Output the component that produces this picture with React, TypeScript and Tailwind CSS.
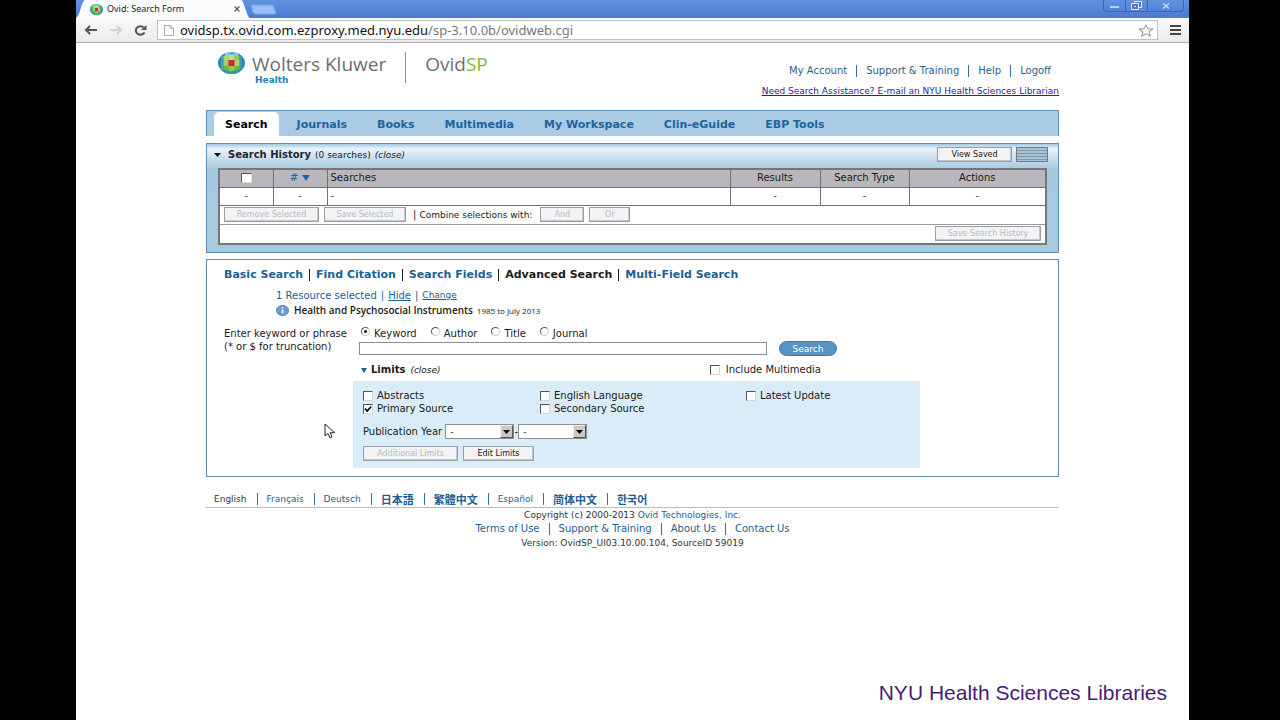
import type { ReactNode } from "react";

const tabs = ["Journals", "Books", "Multimedia", "My Workspace", "Clin-eGuide", "EBP Tools"];

const buttonStyle =
  "border border-[#9a9fa5] bg-[#f1f3f5] text-center text-[8px] leading-3 text-[#222] shadow-[inset_-1px_-1px_0_#c4c8cc] disabled:text-[#b9bcbf]";

function Globe({ className }: { className: string }) {
  return (
    <svg viewBox="0 0 28 22" preserveAspectRatio="none" className={className} aria-hidden="true">
      <clipPath id="globe">
        <ellipse cx="14" cy="11" rx="14" ry="11" />
      </clipPath>
      <g clipPath="url(#globe)">
        <rect width="28" height="22" fill="#2b86b5" />
        <rect x="3" y="4" width="4" height="14" fill="#4aa7a0" />
        <rect x="21" y="4" width="4" height="14" fill="#3d9cab" />
        <rect x="7" y="0" width="14" height="4" fill="#8ecbd6" />
        <rect x="12" y="0" width="5" height="4" fill="#5fb0cf" />
        <rect x="7" y="18" width="14" height="4" fill="#3a9a8c" />
        <rect x="6" y="4" width="16" height="14" fill="#69b741" />
        <rect x="6" y="4" width="5" height="4" fill="#a9d77c" />
        <rect x="17" y="4" width="5" height="4" fill="#8cc957" />
        <rect x="11" y="3" width="6" height="5" fill="#bfe08a" />
        <rect x="6" y="8" width="5" height="6" fill="#9bd058" />
        <rect x="17" y="8" width="5" height="6" fill="#a8d667" />
        <rect x="11" y="14" width="6" height="5" fill="#8ccb4e" />
        <rect x="11" y="8" width="6" height="6" fill="#dc1c48" />
      </g>
    </svg>
  );
}

function BrowserBar() {
  return (
    <header>
      <div className="flex h-[18px] items-start justify-between bg-linear-to-b from-[#6293e0] to-[#4a78cf]">
        <div className="flex h-full items-center">
          <div className="relative flex h-full w-[174px] items-center pr-[10px] pl-[14px]">
            <svg
              viewBox="0 0 178 18"
              preserveAspectRatio="none"
              className="absolute inset-0 h-full w-full"
              aria-hidden="true"
            >
              <path d="M0 18 C4 16 5 3 9 0 H169 C173 3 174 16 178 18 Z" fill="#fafbfc" />
            </svg>
            <Globe className="relative h-[11px] w-[13px]" />
            <span className="relative ml-[4px] flex-1 font-['Noto_Sans',sans-serif] text-[9px] text-[#222]">
              Ovid: Search Form
            </span>
            <button type="button" aria-label="Close tab" className="relative">
              <svg viewBox="0 0 6 6" className="h-[6px] w-[6px]" aria-hidden="true">
                <path d="M0.5 0.5 L5.5 5.5 M5.5 0.5 L0.5 5.5" stroke="#555" strokeWidth="1.2" />
              </svg>
            </button>
          </div>
          <button type="button" aria-label="New tab">
            <svg viewBox="0 0 28 11" className="h-[11px] w-[28px]" aria-hidden="true">
              <path d="M1 1 H21 Q23 1 24 3 L26 10 H6 Q4 10 3 8 Z" fill="#98bdf3" stroke="#7ba6e8" />
            </svg>
          </button>
        </div>
        <div className="mr-[5px] flex h-[12px] divide-x divide-[#3e66b5] rounded-b-sm border border-t-0 border-[#3e66b5]">
          <button type="button" aria-label="Minimize" className="flex w-[22px] items-center justify-center">
            <span className="mt-[2px] h-[2px] w-[9px] bg-[#b9cff3]" />
          </button>
          <button type="button" aria-label="Restore" className="flex w-[22px] items-center justify-center">
            <svg viewBox="0 0 11 9" className="h-[9px] w-[11px]" fill="#4a76c4" stroke="#e8f0fd" aria-hidden="true">
              <path d="M3.5 0.5 H10.5 V6.5 H3.5 Z" />
              <path d="M0.5 2.5 H7.5 V8.5 H0.5 Z" />
              <path d="M3 5.5 H5" />
            </svg>
          </button>
          <button type="button" aria-label="Close" className="flex w-[35px] items-center justify-center">
            <svg viewBox="0 0 8 6" className="h-[6px] w-[8px]" aria-hidden="true">
              <path d="M1 0.5 L7 5.5 M7 0.5 L1 5.5" stroke="#c6d8f5" strokeWidth="1.5" />
            </svg>
          </button>
        </div>
      </div>
      <div className="flex h-[25px] items-center border-b border-[#a9a9a9] bg-linear-to-b from-[#f9f9f9] to-[#ebebeb] pr-[8px] pl-[8px]">
        <button type="button" aria-label="Back">
          <svg viewBox="0 0 14 10" className="h-[10px] w-[14px]" aria-hidden="true">
            <path d="M6 1 L2 5 L6 9 M2 5 H13" fill="none" stroke="#555" strokeWidth="2" />
          </svg>
        </button>
        <button type="button" aria-label="Forward" className="ml-[11px]">
          <svg viewBox="0 0 14 10" className="h-[10px] w-[14px]" aria-hidden="true">
            <path d="M8 1 L12 5 L8 9 M12 5 H1" fill="none" stroke="#d0d0d0" strokeWidth="2" />
          </svg>
        </button>
        <button type="button" aria-label="Reload" className="ml-[11px]">
          <svg viewBox="0 0 13 11" className="h-[11px] w-[13px]" aria-hidden="true">
            <path d="M10.5 7.5 A4.6 4.2 0 1 1 9.8 2.6" fill="none" stroke="#555" strokeWidth="2" />
            <path d="M12.5 0 V5 H7 Z" fill="#555" />
          </svg>
        </button>
        <div className="ml-[10px] flex h-[20px] flex-1 items-center border border-[#b9c3c9] bg-white pr-[3px] pl-[6px]">
          <svg viewBox="0 0 10 11" className="h-[11px] w-[10px]" aria-hidden="true">
            <path d="M0.5 0.5 H6 L9.5 3.5 V10.5 H0.5 Z M6 0.5 V3.5 H9.5" fill="#fff" stroke="#aaa" />
          </svg>
          <p className="ml-[6px] flex-1 font-['Noto_Sans',sans-serif] text-[13px] leading-4 text-[#777]">
            <span className="text-[#111]">ovidsp.tx.ovid.com.ezproxy.med.nyu.edu</span>/sp-3.10.0b/ovidweb.cgi
          </p>
          <button type="button" aria-label="Bookmark">
            <svg viewBox="0 0 16 13" className="h-[13px] w-[16px]" aria-hidden="true">
              <path
                d="M8 0.8 L9.8 4.8 L15 5 L11 7.9 L12.4 12.2 L8 9.8 L3.6 12.2 L5 7.9 L1 5 L6.2 4.8 Z"
                fill="#fff"
                stroke="#8b8b8b"
              />
            </svg>
          </button>
        </div>
        <button type="button" aria-label="Menu" className="ml-[12px] flex w-[11px] flex-col gap-[2px]">
          <span className="h-[2px] bg-[#444]" />
          <span className="h-[2px] bg-[#444]" />
          <span className="h-[2px] bg-[#444]" />
        </button>
      </div>
    </header>
  );
}

function Separator() {
  return <span className="h-[12px] w-px bg-[#3a7096]" />;
}

function Masthead() {
  return (
    <div className="flex h-[67px] items-start justify-between">
      <div className="flex items-start pt-[9px] pl-[12px]">
        <Globe className="mr-[7px] h-[22px] w-[27px]" />
        <div>
          <p className="font-['Open_Sans',sans-serif] text-[19px] leading-6 text-[#6d6e71]">Wolters Kluwer</p>
          <p className="pl-[3px] text-[9px] leading-2 font-bold text-[#2680b4]">Health</p>
        </div>
        <span className="mx-[19px] h-[31px] w-px bg-[#5f9cb8]" />
        <p className="font-['Open_Sans',sans-serif] text-[19px] leading-6 text-[#6d6e71]">
          Ovid<span className="text-[#7cb82f]">SP</span>
        </p>
      </div>
      <div className="flex flex-col items-end pt-[20px]">
        <nav className="flex items-center gap-[9px] pr-[8px] leading-4 text-[#2b5f87]">
          <a href="#account">My Account</a>
          <Separator />
          <a href="#support">Support &amp; Training</a>
          <Separator />
          <a href="#help">Help</a>
          <Separator />
          <a href="#logoff">Logoff</a>
        </nav>
        <a href="#librarian" className="mt-[4px] text-[9px] leading-4 text-[#2a1ba8] underline">
          Need Search Assistance? E-mail an NYU Health Sciences Librarian
        </a>
      </div>
    </div>
  );
}

function TabBar() {
  return (
    <nav className="flex h-[26px] items-end border border-b-0 border-[#5f8fb4] bg-[#a9cbe3] pl-[7px] text-[11px] font-bold text-[#1c64a0]">
      <a href="#search" className="rounded-t-[5px] bg-white px-[11px] pt-[5px] pb-[3px] leading-4 text-black">
        Search
      </a>
      <div className="flex gap-[30px] pb-[3px] pl-[18px] leading-4">
        {tabs.map((tab) => (
          <a key={tab} href={"#" + tab}>
            {tab}
          </a>
        ))}
      </div>
    </nav>
  );
}

function SearchHistory() {
  const cell = "border-r border-[#6f7174] last:border-r-0";
  return (
    <section className="mt-[7px] border border-[#5f8fb4] bg-linear-to-b from-[#a5c8e2] to-[#a6cbdc] px-[11px] pb-[7px]">
      <div className="-mx-[11px] flex h-[24px] items-center bg-linear-to-b from-[#a5c8e2] via-[#e9f2f9] via-20% to-[#a9cbe3] pr-[10px] pb-[3px] pl-[7px]">
        <svg viewBox="0 0 7 4" className="h-[4px] w-[7px]" aria-hidden="true">
          <path d="M0 0 H7 L3.5 4 Z" fill="#111" />
        </svg>
        <h2 className="ml-[7px] font-bold text-[#1c2733]">Search History</h2>
        <span className="ml-[4px] text-[9px]">(0 searches)</span>
        <a href="#close" className="ml-[4px] text-[9px] italic">
          (close)
        </a>
        <button type="button" className={`${buttonStyle} ml-auto h-[15px] w-[75px]`}>
          View Saved
        </button>
        <button
          type="button"
          aria-label="View layout"
          className="ml-[4px] h-[15px] w-[32px] border border-[#5f7f96] bg-[repeating-linear-gradient(#a9c1d1_0_2px,#7d98aa_2px_3px)]"
        />
      </div>
      <table className="w-full table-fixed border-collapse border-2 border-[#73777c] bg-white text-center">
        <thead>
          <tr className="h-[18px] bg-[#b9b7bb]">
            <th className={`${cell} w-[54px] font-normal`}>
              <input
                type="checkbox"
                aria-label="Select all searches"
                className="mx-auto block h-[10px] w-[11px] appearance-none border border-t-[#555] border-r-[#ddd] border-b-[#ddd] border-l-[#555] bg-white"
              />
            </th>
            <th className={`${cell} w-[54px] font-normal text-[#1c64a0]`}>
              <span className="inline-flex items-center gap-[4px]">
                #
                <svg viewBox="0 0 8 6" className="h-[6px] w-[8px]" aria-hidden="true">
                  <path d="M0 0 H8 L4 6 Z" fill="#1c64a0" />
                </svg>
              </span>
            </th>
            <th className={`${cell} pl-[3px] text-left font-normal`}>Searches</th>
            <th className={`${cell} w-[90px] font-normal`}>Results</th>
            <th className={`${cell} w-[89px] font-normal`}>Search Type</th>
            <th className={`${cell} w-[137px] font-normal`}>Actions</th>
          </tr>
        </thead>
        <tbody>
          <tr className="h-[18px] border-y border-[#6f7174] text-[#555]">
            <td className={cell}>-</td>
            <td className={cell}>-</td>
            <td className={`${cell} pl-[3px] text-left`}>-</td>
            <td className={cell}>-</td>
            <td className={cell}>-</td>
            <td className={cell}>-</td>
          </tr>
          <tr className="h-[19px] border-b border-[#9a9c9f]">
            <td colSpan={6} className="px-[4px]">
              <div className="flex items-center">
                <button type="button" disabled className={`${buttonStyle} h-[15px] w-[95px]`}>
                  Remove Selected
                </button>
                <button type="button" disabled className={`${buttonStyle} ml-[5px] h-[15px] w-[82px]`}>
                  Save Selected
                </button>
                <span className="mr-[3px] ml-[7px]">|</span>
                <span className="text-[9px]">Combine selections with:</span>
                <button type="button" disabled className={`${buttonStyle} ml-[8px] h-[15px] w-[44px]`}>
                  And
                </button>
                <button type="button" disabled className={`${buttonStyle} ml-[5px] h-[15px] w-[41px]`}>
                  Or
                </button>
              </div>
            </td>
          </tr>
          <tr className="h-[20px]">
            <td colSpan={6} className="px-[4px]">
              <button type="button" disabled className={`${buttonStyle} ml-auto block h-[15px] w-[106px]`}>
                Save Search History
              </button>
            </td>
          </tr>
        </tbody>
      </table>
    </section>
  );
}

function CheckOption({ label, checked, wide }: { label: string; checked?: boolean; wide?: boolean }) {
  return (
    <label className={`flex items-center ${wide ? "gap-[6px]" : "gap-[4px]"}`}>
      <span className="relative h-[10px] w-[10px]">
        <input
          type="checkbox"
          defaultChecked={checked}
          className="peer block h-[10px] w-[10px] appearance-none border border-t-[#555] border-r-[#d5d5d5] border-b-[#d5d5d5] border-l-[#555] bg-white"
        />
        <svg
          viewBox="0 0 10 10"
          className="pointer-events-none absolute inset-0 hidden h-[10px] w-[10px] peer-checked:block"
          aria-hidden="true"
        >
          <path d="M2 4.5 L4.2 7 L8.2 2.5" fill="none" stroke="#000" strokeWidth="1.8" />
        </svg>
      </span>
      {label}
    </label>
  );
}

function RadioOption({ label, checked }: { label: string; checked?: boolean }) {
  return (
    <label className="flex items-start gap-[4px]">
      <input
        type="radio"
        name="field"
        defaultChecked={checked}
        className="flex h-[9px] w-[9px] appearance-none items-center justify-center rounded-full border border-t-[#555] border-r-[#ccc] border-b-[#ccc] border-l-[#555] bg-white before:h-[3px] before:w-[3px] before:rounded-full checked:before:bg-black"
      />
      {label}
    </label>
  );
}

function YearSelect({ label }: { label: string }) {
  return (
    <span className="relative h-[15px] w-[69px]">
      <select
        aria-label={label}
        className="block h-[15px] w-full appearance-none border border-[#8b8f94] bg-white pl-[4px] text-[9px] leading-3"
      >
        <option>-</option>
      </select>
      <span className="pointer-events-none absolute top-px right-px flex h-[13px] w-[13px] items-center justify-center border border-t-[#eee] border-r-[#555] border-b-[#555] border-l-[#eee] bg-[#cbc7c8]">
        <svg viewBox="0 0 7 4" className="h-[4px] w-[7px]" aria-hidden="true">
          <path d="M0 0 H7 L3.5 4 Z" fill="#000" />
        </svg>
      </span>
    </span>
  );
}

function ModeLink({ children }: { children: ReactNode }) {
  return (
    <a href="#mode" className="text-[#1c5f94]">
      {children}
    </a>
  );
}

function SearchForm() {
  return (
    <section className="mt-[6px] border border-[#5f87a4] bg-white pt-[7px] pb-[8px] pl-[17px]">
      <nav className="flex items-center gap-[6px] text-[11px] leading-4 font-bold">
        <ModeLink>Basic Search</ModeLink>
        <span className="h-[12px] w-px bg-[#222]" />
        <ModeLink>Find Citation</ModeLink>
        <span className="h-[12px] w-px bg-[#222]" />
        <ModeLink>Search Fields</ModeLink>
        <span className="h-[12px] w-px bg-[#222]" />
        <span>Advanced Search</span>
        <span className="h-[12px] w-px bg-[#222]" />
        <ModeLink>Multi-Field Search</ModeLink>
      </nav>

      <div className="mt-[5px] pl-[52px] leading-[15px]">
        <p className="flex gap-[4px] text-[#1c5f94]">
          <span>1 Resource selected</span>
          <span>|</span>
          <a href="#hide" className="underline">
            Hide
          </a>
          <span>|</span>
          <a href="#change" className="text-[9px] underline">
            Change
          </a>
        </p>
        <p className="flex items-center">
          <svg viewBox="0 0 13 11" className="h-[11px] w-[13px]" aria-hidden="true">
            <ellipse cx="6.5" cy="5.5" rx="6" ry="5" fill="#6d9bd1" stroke="#4f7db5" />
            <path d="M6.5 4.5 V8.5 M6.5 2 V3.4" stroke="#fff" strokeWidth="1.6" />
          </svg>
          <span className="ml-[5px] font-['Open_Sans',sans-serif] font-semibold">
            Health and Psychosocial Instruments
          </span>
          <span className="ml-[4px] font-['Open_Sans',sans-serif] text-[8px]">1985 to July 2013</span>
        </p>
      </div>

      <div className="mt-[9px] flex">
        <label htmlFor="query" className="w-[135px] leading-[13px]">
          Enter keyword or phrase
          <br />
          (* or $ for truncation)
        </label>
        <div>
          <div className="flex h-[14px] gap-[14px] pl-[2px] leading-[13px]">
            <RadioOption label="Keyword" checked />
            <RadioOption label="Author" />
            <RadioOption label="Title" />
            <RadioOption label="Journal" />
          </div>
          <div className="flex items-center gap-[12px]">
            <input id="query" type="text" className="h-[13px] w-[408px] border border-[#8b8f94] bg-white px-1" />
            <button
              type="button"
              className="h-[15px] w-[58px] rounded-full border border-[#3d78aa] bg-[#5594c5] text-[9px] leading-3 text-white"
            >
              Search
            </button>
          </div>
        </div>
      </div>

      <div className="mt-[6px] ml-[137px] flex h-[16px] w-[460px] items-center">
        <svg viewBox="0 0 6 5" className="h-[5px] w-[6px]" aria-hidden="true">
          <path d="M0 0 H6 L3 5 Z" fill="#1c5f94" />
        </svg>
        <span className="ml-[4px] font-bold">Limits</span>
        <a href="#close-limits" className="ml-[5px] flex-1 text-[9px] italic">
          (close)
        </a>
        <CheckOption label="Include Multimedia" wide />
      </div>

      <div className="mt-[3px] ml-[129px] max-w-[567px] bg-[#daecf8] pt-[8px] pb-[7px] pl-[10px]">
        <div className="grid grid-cols-[177px_206px_1fr] leading-[13px]">
          <CheckOption label="Abstracts" />
          <CheckOption label="English Language" />
          <CheckOption label="Latest Update" />
          <CheckOption label="Primary Source" checked />
          <CheckOption label="Secondary Source" />
        </div>
        <div className="mt-[9px] flex items-center">
          <span className="mr-[3px]">Publication Year</span>
          <YearSelect label="Publication year from" />
          <span className="w-[4px] text-center">-</span>
          <YearSelect label="Publication year to" />
        </div>
        <div className="mt-[7px] flex gap-[5px]">
          <button type="button" disabled className={`${buttonStyle} h-[15px] w-[95px]`}>
            Additional Limits
          </button>
          <button type="button" className={`${buttonStyle} h-[15px] w-[71px]`}>
            Edit Limits
          </button>
        </div>
      </div>
    </section>
  );
}

function Footer() {
  return (
    <footer className="text-[9px] text-[#1c5f94]">
      <nav className="mt-[14px] flex items-center gap-[9px] border-b border-[#b9bcbf] pl-[8px] leading-4 [&>a]:pr-px">
        <a href="#en" className="text-[#333]">English</a>
        <Separator />
        <a href="#fr">Français</a>
        <Separator />
        <a href="#de">Deutsch</a>
        <Separator />
        <a href="#ja" className="font-['Noto_Sans_CJK_JP',sans-serif] text-[11px] font-bold">日本語</a>
        <Separator />
        <a href="#zh-tw" className="font-['Noto_Sans_CJK_TC',sans-serif] text-[11px] font-bold">繁體中文</a>
        <Separator />
        <a href="#es">Español</a>
        <Separator />
        <a href="#zh-cn" className="font-['Noto_Sans_CJK_SC',sans-serif] text-[11px] font-bold">简体中文</a>
        <Separator />
        <a href="#ko" className="font-['Noto_Sans_CJK_KR',sans-serif] text-[11px] font-bold">한국어</a>
      </nav>
      <div className="flex flex-col items-center leading-[14px]">
        <p className="text-[#333]">
          Copyright (c) 2000-2013{" "}
          <a href="#ovid" className="text-[#1c5f94]">
            Ovid Technologies, Inc.
          </a>
        </p>
        <nav className="flex items-center gap-[9px] text-[10px]">
          <a href="#terms">Terms of Use</a>
          <Separator />
          <a href="#training">Support &amp; Training</a>
          <Separator />
          <a href="#about">About Us</a>
          <Separator />
          <a href="#contact">Contact Us</a>
        </nav>
        <p className="text-[#333]">Version: OvidSP_UI03.10.00.104, SourceID 59019</p>
      </div>
    </footer>
  );
}

export default function App() {
  return (
    <div className="min-h-screen bg-black pr-[91px] pl-[76px]">
      <div className="relative flex min-h-screen flex-col bg-white font-['DejaVu_Sans',sans-serif] text-[10px] leading-3 text-[#1a1a1a]">
        <BrowserBar />
        <main className="mx-auto w-full max-w-[853px]">
          <Masthead />
          <TabBar />
          <SearchHistory />
          <SearchForm />
          <Footer />
        </main>
        <p className="mt-auto self-end pr-[22px] pb-[13px] font-['Liberation_Sans',sans-serif] text-[21px] leading-7 text-[#4b1a78]">
          NYU Health Sciences Libraries
        </p>
        <svg
          viewBox="0 0 12 16"
          className="pointer-events-none absolute top-[423px] left-[248px] h-[16px] w-[12px]"
          aria-hidden="true"
        >
          <path d="M1 1 V13 L4 10.5 L6 15 L8 14 L6.3 9.7 H10.5 Z" fill="#fff" stroke="#222" />
        </svg>
      </div>
    </div>
  );
}
